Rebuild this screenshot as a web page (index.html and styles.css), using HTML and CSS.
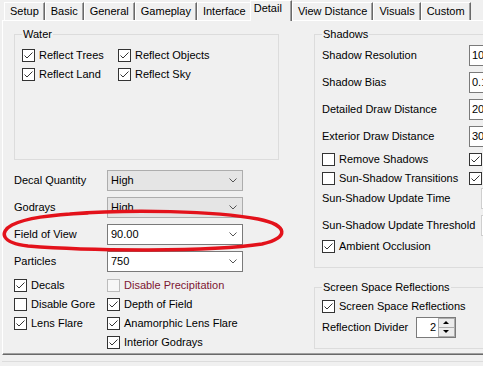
FILE: index.html
```html
<!DOCTYPE html>
<html>
<head>
  <title>Detail settings</title>
  <link rel="stylesheet" href="styles.css">
</head>
<body>

<div class="window">
  <div class="tabs">
    <div class="tab">Setup</div>
    <div class="tab">Basic</div>
    <div class="tab">General</div>
    <div class="tab">Gameplay</div>
    <div class="tab">Interface</div>
    <div class="tab active">Detail</div>
    <div class="tab">View Distance</div>
    <div class="tab">Visuals</div>
    <div class="tab">Custom</div>
  </div>

  <div class="panel">
    <div class="col-left">
      <fieldset class="group water">
        <legend>Water</legend>
        <div class="check-grid">
          <label class="check"><span class="box"><svg viewBox="0 0 11 11"><path d="M1.5 5.5 4 8 9.5 2.5"/></svg></span>Reflect Trees</label>
          <label class="check"><span class="box"><svg viewBox="0 0 11 11"><path d="M1.5 5.5 4 8 9.5 2.5"/></svg></span>Reflect Objects</label>
          <label class="check"><span class="box"><svg viewBox="0 0 11 11"><path d="M1.5 5.5 4 8 9.5 2.5"/></svg></span>Reflect Land</label>
          <label class="check"><span class="box"><svg viewBox="0 0 11 11"><path d="M1.5 5.5 4 8 9.5 2.5"/></svg></span>Reflect Sky</label>
        </div>
      </fieldset>

      <div class="fields">
        <div class="field">
          <span class="field-label">Decal Quantity</span>
          <div class="combo list"><span>High</span><svg class="chev" viewBox="0 0 8 5"><polyline points="0.5,0.5 4,4 7.5,0.5"/></svg></div>
        </div>
        <div class="field">
          <span class="field-label">Godrays</span>
          <div class="combo list"><span>High</span><svg class="chev" viewBox="0 0 8 5"><polyline points="0.5,0.5 4,4 7.5,0.5"/></svg></div>
        </div>
        <div class="field">
          <span class="field-label">Field of View</span>
          <div class="combo"><span>90.00</span><svg class="chev" viewBox="0 0 8 5"><polyline points="0.5,0.5 4,4 7.5,0.5"/></svg></div>
        </div>
        <div class="field">
          <span class="field-label">Particles</span>
          <div class="combo"><span>750</span><svg class="chev" viewBox="0 0 8 5"><polyline points="0.5,0.5 4,4 7.5,0.5"/></svg></div>
        </div>
      </div>

      <div class="check-grid lower">
        <label class="check"><span class="box"><svg viewBox="0 0 11 11"><path d="M1.5 5.5 4 8 9.5 2.5"/></svg></span>Decals</label>
        <label class="check red"><span class="box disabled"></span>Disable Precipitation</label>
        <label class="check"><span class="box"></span>Disable Gore</label>
        <label class="check"><span class="box"><svg viewBox="0 0 11 11"><path d="M1.5 5.5 4 8 9.5 2.5"/></svg></span>Depth of Field</label>
        <label class="check"><span class="box"><svg viewBox="0 0 11 11"><path d="M1.5 5.5 4 8 9.5 2.5"/></svg></span>Lens Flare</label>
        <label class="check"><span class="box"><svg viewBox="0 0 11 11"><path d="M1.5 5.5 4 8 9.5 2.5"/></svg></span>Anamorphic Lens Flare</label>
        <span></span>
        <label class="check"><span class="box"><svg viewBox="0 0 11 11"><path d="M1.5 5.5 4 8 9.5 2.5"/></svg></span>Interior Godrays</label>
      </div>
    </div>

    <div class="col-right">
      <fieldset class="group shadows">
        <legend>Shadows</legend>
        <div class="stack">
          <div class="row"><span class="row-label">Shadow Resolution</span><span class="text-box">10</span></div>
          <div class="row"><span class="row-label">Shadow Bias</span><span class="text-box">0.1</span></div>
          <div class="row"><span class="row-label">Detailed Draw Distance</span><span class="text-box">20</span></div>
          <div class="row"><span class="row-label">Exterior Draw Distance</span><span class="text-box">30</span></div>
          <div class="pair">
            <label class="check"><span class="box"></span>Remove Shadows</label>
            <span class="box"><svg viewBox="0 0 11 11"><path d="M1.5 5.5 4 8 9.5 2.5"/></svg></span>
          </div>
          <div class="pair">
            <label class="check"><span class="box"></span>Sun-Shadow Transitions</label>
            <span class="box"><svg viewBox="0 0 11 11"><path d="M1.5 5.5 4 8 9.5 2.5"/></svg></span>
          </div>
          <div class="row wide first-wide"><span class="row-label">Sun-Shadow Update Time</span><span class="text-box faint"></span></div>
          <div class="row wide"><span class="row-label">Sun-Shadow Update Threshold</span><span class="text-box faint"></span></div>
          <label class="check ambient"><span class="box"><svg viewBox="0 0 11 11"><path d="M1.5 5.5 4 8 9.5 2.5"/></svg></span>Ambient Occlusion</label>
        </div>
      </fieldset>

      <fieldset class="group ssr">
        <legend>Screen Space Reflections</legend>
        <label class="check ssr-check"><span class="box"><svg viewBox="0 0 11 11"><path d="M1.5 5.5 4 8 9.5 2.5"/></svg></span>Screen Space Reflections</label>
        <div class="row divider">
          <span class="row-label">Reflection Divider</span>
          <div class="spin">
            <span class="spin-value">2</span>
            <div class="spin-buttons">
              <span class="spin-btn up"></span>
              <span class="spin-btn down"></span>
            </div>
          </div>
        </div>
      </fieldset>
    </div>
  </div>

  <div class="footer"></div>
</div>

<!-- red marker drawn over the screenshot -->
<svg class="marker" viewBox="0 0 483 366">
  <path d="M70 214 C130 209 215 211 258 219 C289 225 289 238 262 244 C210 252 90 251 28 246 C1 243 -1 232 12 225 C26 218 48 215 88 213"/>
</svg>

</body>
</html>
```

FILE: styles.css
```css
body {
  margin: 0;
  width: 483px;
  height: 366px;
  overflow: hidden;
  position: relative;
  background: #f0f0f0;
  color: #000;
  font-family: "Liberation Sans", Arial, sans-serif;
  font-size: 11px;
  line-height: 13px;
}

.window {
  padding-left: 2px;
}

/* tab strip */
.tabs {
  display: flex;
  align-items: flex-end;
  height: 20px;
  padding-left: 2px;
}

.tab {
  height: 18px;
  box-sizing: border-box;
  padding: 0 5px;
  line-height: 17px;
  white-space: nowrap;
  border-top: 1px solid #fff;
  border-left: 1px solid #fff;
  border-right: 1px solid #696969;
  box-shadow: inset -1px 0 #a0a0a0;
}

.tab.active {
  height: 21px;
  margin: 0 0 -1px -2px;
  padding: 0 9px 0 3px;
  line-height: 15px;
  position: relative;
  z-index: 1;
  background: #f0f0f0;
}

.panel {
  display: flex;
  width: 560px;
  height: 335px;
  box-sizing: border-box;
  padding: 7px 0 0 11px;
  border-top: 1px solid #fff;
  border-left: 1px solid #fff;
  border-bottom: 1px solid #696969;
  box-shadow: inset 0 -1px #a0a0a0;
}

.footer {
  margin-top: 6px;
  height: 10px;
  border-top: 1px solid #dcdcdc;
}

.col-left {
  width: 265px;
  flex: none;
}

.col-right {
  width: 220px;
  margin-left: 35px;
  flex: none;
}

/* group boxes */
.group {
  margin: 0;
  padding: 0 7px;
  min-width: 0;
  border: 1px solid #dcdcdc;
}

.group legend {
  padding: 0 1px;
  line-height: 13px;
}

.water {
  padding-bottom: 78px;
}

.shadows {
  padding-bottom: 14px;
}

.ssr {
  margin-top: 13px;
  padding-bottom: 10px;
}

/* checkboxes */
.check-grid {
  display: grid;
  grid-template-columns: 96px auto;
  row-gap: 6px;
  margin-top: 8px;
}

.check-grid.lower {
  grid-template-columns: 93px auto;
  margin-top: 7px;
}

.check {
  display: flex;
  align-items: center;
  gap: 4px;
  height: 13px;
  white-space: nowrap;
}

.check.red {
  color: #7d1632;
}

.box {
  width: 13px;
  height: 13px;
  box-sizing: border-box;
  flex: none;
  border: 1px solid #333;
  background: #fff;
}

.box.disabled {
  border-color: #bcbcbc;
  background: #f7f7f7;
}

.box svg {
  display: block;
  width: 11px;
  height: 11px;
}

.box path {
  fill: none;
  stroke: #333;
  stroke-width: 1;
}

/* combo boxes */
.fields {
  display: flex;
  flex-direction: column;
  gap: 6px;
  margin-top: 10px;
}

.field {
  display: flex;
  align-items: center;
  height: 21px;
}

.field-label {
  width: 93px;
  flex: none;
}

.combo {
  width: 136px;
  height: 21px;
  box-sizing: border-box;
  display: flex;
  align-items: center;
  justify-content: space-between;
  padding: 0 5px 0 3px;
  border: 1px solid #7a7a7a;
  background: #fff;
}

.combo.list {
  border-color: #adadad;
  background: #e5e5e5;
}

.chev {
  width: 8px;
  height: 5px;
}

.chev polyline {
  fill: none;
  stroke: #555;
  stroke-width: 1;
}

/* right column rows */
.stack {
  display: flex;
  flex-direction: column;
  gap: 6px;
  margin-top: 4px;
}

.row {
  display: flex;
  align-items: center;
  height: 21px;
}

.row-label {
  width: 147px;
  flex: none;
  white-space: nowrap;
}

.row.wide .row-label {
  width: 159px;
}

.first-wide {
  margin-top: -3px;
}

.ambient {
  margin-top: -2px;
}

.text-box {
  width: 40px;
  height: 21px;
  box-sizing: border-box;
  flex: none;
  padding: 0 2px;
  line-height: 19px;
  border: 1px solid #7a7a7a;
  background: #fff;
}

.text-box.faint {
  border-color: #cfcfcf;
}

.pair {
  display: grid;
  grid-template-columns: 147px auto;
}

.ssr-check {
  margin-top: 6px;
}

.divider {
  margin-top: 4px;
}

.divider .row-label {
  width: 94px;
}

/* numeric up/down */
.spin {
  width: 40px;
  height: 21px;
  box-sizing: border-box;
  display: flex;
  border: 1px solid #7a7a7a;
  background: #fff;
}

.spin-value {
  flex: 1;
  text-align: right;
  padding-right: 2px;
  line-height: 19px;
}

.spin-buttons {
  width: 17px;
  display: flex;
  flex-direction: column;
}

.spin-btn {
  flex: 1;
  position: relative;
  border: 1px solid #adadad;
  background: #ececec;
}

.spin-btn.down {
  border-top: none;
}

.spin-btn::after {
  content: "";
  position: absolute;
  left: 4px;
  top: 2px;
  border-left: 3px solid transparent;
  border-right: 3px solid transparent;
}

.spin-btn.up::after {
  border-bottom: 3px solid #000;
}

.spin-btn.down::after {
  top: 2px;
  border-top: 3px solid #000;
}

/* annotation */
.marker {
  position: absolute;
  top: 0;
  left: 0;
  width: 483px;
  height: 366px;
  pointer-events: none;
}

.marker path {
  fill: none;
  stroke: #e3121b;
  stroke-width: 3.5;
  stroke-linecap: round;
}
```
